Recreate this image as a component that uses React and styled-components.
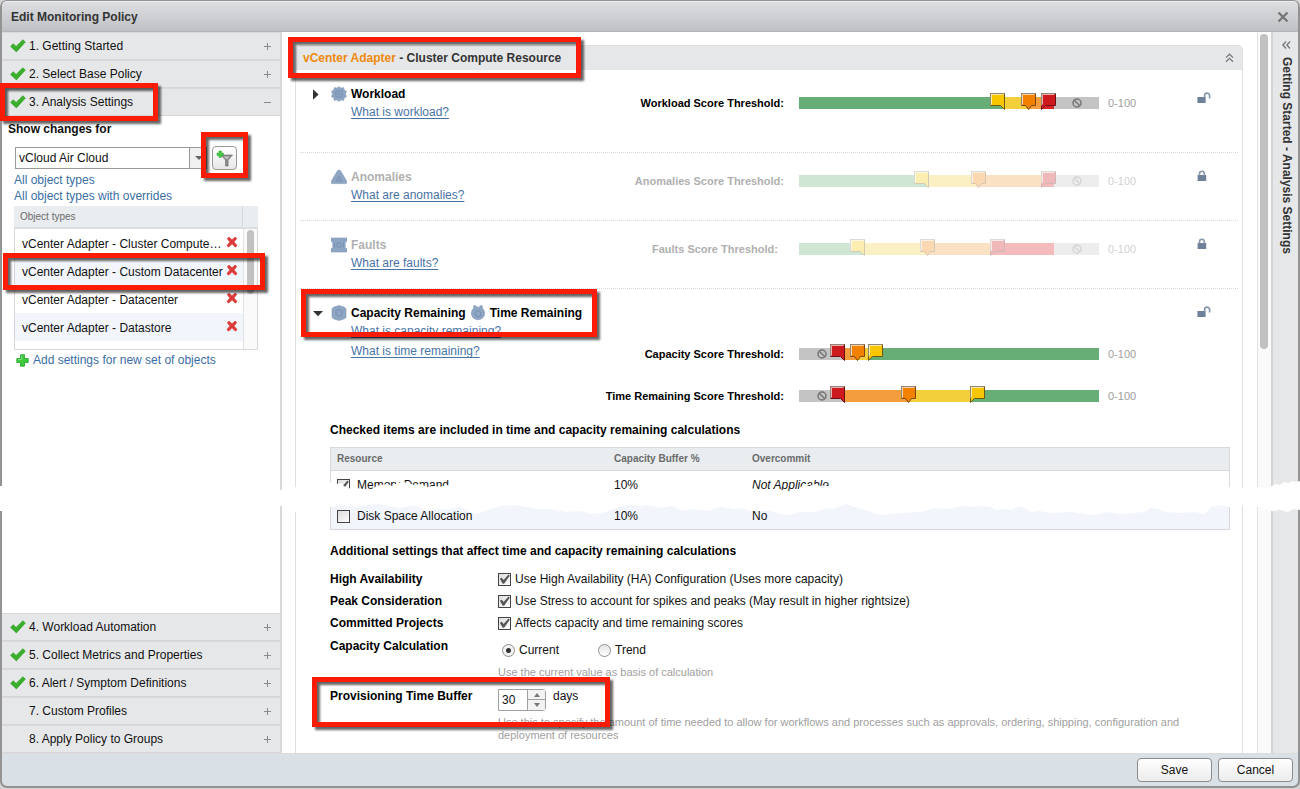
import { useState } from 'react'
import styled, { createGlobalStyle, css } from 'styled-components'

const GlobalStyle = createGlobalStyle`
  * {
    box-sizing: border-box;
  }

  body {
    margin: 0;
    background: #d4d4d4;
    color: #111;
    font-family: "Liberation Sans", Arial, Helvetica, sans-serif;
    font-size: 12px;
    line-height: 16px;
  }

  button, input, select {
    margin: 0;
    padding: 0;
    font: inherit;
    color: inherit;
  }
`

const Dialog = styled.div`
  position: relative;
  display: flex;
  flex-direction: column;
  height: calc(100vh - 1px);
  min-height: 600px;
  border: 2px solid #939393;
  border-top-width: 1px;
  border-radius: 7px;
  background: #d9e0e6;
`

const TitleBar = styled.header`
  display: flex;
  flex: none;
  align-items: center;
  justify-content: space-between;
  height: 31px;
  padding: 0 9px;
  border-top: 1px solid #ececee;
  border-bottom: 1px solid #b4b6b9;
  border-radius: 5px 5px 0 0;
  background: linear-gradient(#dddee1, #bfc1c5);
`

const Title = styled.h1`
  margin: 0;
  font-size: 12px;
  color: #333;
`

const IconButton = styled.button`
  display: flex;
  align-items: center;
  justify-content: center;
  border: 0;
  background: none;
  cursor: pointer;
`

const Body = styled.div`
  display: flex;
  flex: 1;
  min-height: 0;
`

const Footer = styled.footer`
  display: flex;
  flex: none;
  align-items: center;
  justify-content: flex-end;
  gap: 6px;
  height: 33px;
  padding: 0 5px;
  border-top: 1px solid #dcdcdc;
`

const FooterButton = styled.button`
  width: 75px;
  height: 24px;
  border: 1px solid #8c8c8c;
  border-radius: 4px;
  background: linear-gradient(#fff, #ececec);
  cursor: pointer;
`

/* red frame laid over a part of the dialog */
const Highlight = styled.div`
  position: absolute;
  z-index: 5;
  top: ${({ $top }) => $top}px;
  left: ${({ $left }) => $left}px;
  width: ${({ $width }) => $width}px;
  height: ${({ $height }) => $height}px;
  border: 5px solid #fa1c05;
  filter: drop-shadow(3px 3px 1px rgba(0, 0, 0, 0.6));
  pointer-events: none;
`

const Anchor = styled.div`
  position: relative;
`

const Sidebar = styled.aside`
  display: flex;
  flex: none;
  flex-direction: column;
  width: 280px;
  border-right: 2px solid #d9d9db;
  background: #fff;
`

const SectionButton = styled.button`
  display: flex;
  align-items: center;
  width: 100%;
  height: 28px;
  padding: 0 8px;
  border: 0;
  border-top: 1px solid #dadadc;
  border-bottom: 1px solid #d6d6d8;
  background: #e6e7e9;
  text-align: left;
  cursor: pointer;
`

const CheckSlot = styled.span`
  display: flex;
  width: 19px;
`

const SectionName = styled.span`
  flex: 1;
`

const SectionBody = styled.div`
  flex: 1;
  min-height: 0;
  padding: 5px 22px 0 12px;
`

const FieldLabel = styled.label`
  display: block;
  margin: 0 0 9px -6px;
  font-weight: bold;
`

const PickerRow = styled.div`
  display: flex;
  align-items: center;
  gap: 5px;
  padding-left: 1px;
`

const SelectBox = styled.div`
  position: relative;
  width: 192px;

  &::after {
    content: '';
    position: absolute;
    top: 9px;
    right: 4px;
    border: 4px solid transparent;
    border-top-color: #666;
    pointer-events: none;
  }
`

const Select = styled.select`
  width: 100%;
  height: 22px;
  padding: 0 20px 0 3px;
  border: 1px solid #999;
  border-radius: 0;
  appearance: none;
  background: linear-gradient(90deg, #fff calc(100% - 17px), #999 calc(100% - 17px), #999 calc(100% - 16px), #f0f0f0 calc(100% - 16px));
`

const FilterButton = styled(IconButton)`
  width: 25px;
  height: 24px;
  border: 1px solid #999;
  border-radius: 4px;
  background: linear-gradient(#fff, #e8e8e8);
`

const LinkList = styled.div`
  display: flex;
  flex-direction: column;
  align-items: flex-start;
  margin: 2px 0;
`

const Link = styled.a`
  color: #3a6ea5;
  text-decoration: none;
`

const Grid = styled.div`
  position: relative;
`

const GridHead = styled.div`
  display: grid;
  grid-template-columns: 1fr 15px;
  height: 23px;
  border-bottom: 2px solid #dcdddf;
  background: #e9edf0;
  color: #6b6b6b;
  font-size: 10px;
  line-height: 21px;

  span {
    padding-left: 6px;
    border-right: 1px solid #d5d8db;
  }
`

const GridBody = styled.div`
  display: flex;
  height: 121px;
  border: 1px solid #d6d8da;
  border-top: 0;
  overflow: hidden;
`

const TypeList = styled.ul`
  flex: 1;
  min-width: 0;
  margin: 0;
  padding: 0;
  list-style: none;
`

const TypeRow = styled.li`
  display: flex;
  align-items: center;
  justify-content: space-between;
  height: 28px;
  padding: 0 5px 2px 7px;

  &:nth-child(even) {
    background: #f2f5fb;
  }

  span {
    padding-top: 3px;
    white-space: nowrap;
  }
`

const Track = styled.div`
  flex: none;
  width: 14px;
  padding: ${({ $small }) => $small ? '1px 3px' : '2px 3px 2px 2px'};
  border-left: 1px solid #e2e2e2;
  background: #fafafa;
`

const Thumb = styled.div`
  height: ${({ $size }) => $size};
  border-radius: 4px;
  background: #c1c1c1;
`

const AddLink = styled(Link)`
  display: flex;
  align-items: center;
  gap: 4px;
  margin: 2px 0 0 2px;
`

const Main = styled.main`
  flex: 1;
  min-width: 0;
  padding: 13px 14px 0 13px;
  background: #fff;
  overflow: hidden;
`

const Panel = styled.section`
  min-height: 100%;
  padding-bottom: 30px;
  border: 1px solid #dedfe1;
  border-radius: 5px 5px 0 0;
`

const PanelHead = styled.div`
  position: relative;
  display: flex;
  align-items: center;
  justify-content: space-between;
  height: 24px;
  padding: 0 8px 0 7px;
  border-radius: 4px 4px 0 0;
  background: #e6e7e9;
`

const PanelTitle = styled.h2`
  margin: 0;
  color: #333;
  font-size: 12px;

  span {
    color: #ee8a0c;
  }
`

const MetricRow = styled.div`
  position: relative;
  display: flex;
  min-height: ${({ $tall }) => $tall ? 83 : 68}px;
  margin: 0 4px;
  border-bottom: ${({ $open }) => $open ? '0' : '1px dotted #d8d8d8'};
`

const Toggle = styled(IconButton)`
  justify-content: flex-start;
  flex: none;
  width: 31px;
  height: 18px;
  margin-top: 15px;
  padding-left: 12px;
`

const Head = styled.div`
  flex: 1;
  padding-top: 15px;
  line-height: 18px;
`

const Names = styled.div`
  display: flex;
  align-items: center;
  gap: 4px;
  color: ${({ $muted }) => $muted ? '#b0b0b0' : '#000'};
  font-weight: bold;
`

const HelpLinks = styled.div`
  display: flex;
  flex-direction: column;
  align-items: flex-start;
  gap: 2px;
  padding-left: 20px;

  a {
    color: #4a73a5;
    text-decoration: underline;
    text-underline-offset: 2px;
  }
`

const Scales = styled.div`
  display: flex;
  flex-direction: column;
  gap: 26px;
  padding-top: ${({ $top }) => $top}px;
`

const ScaleRow = styled.div`
  display: grid;
  grid-template-columns: 190px 300px 83px;
  column-gap: 15px;
  align-items: center;
`

const ScaleLabel = styled.span`
  color: ${({ $muted }) => $muted ? '#b0b0b0' : '#000'};
  font-size: 11px;
  font-weight: bold;
  text-align: right;
  white-space: pre;
`

const Bar = styled.div`
  position: relative;
  display: flex;
  height: 12px;
  opacity: ${({ $muted }) => $muted ? 0.3 : 1};
`

const Segment = styled.span`
  display: flex;
  align-items: center;
  justify-content: center;
  background: ${({ $tone }) => tones[$tone].bar};
`

const Marker = styled.button`
  position: absolute;
  top: -4px;
  width: 15px;
  height: 17px;
  border: 0;
  background: none;
  cursor: pointer;
  transform: translateX(${({ $tail }) => tails[$tail].shift});

  svg {
    display: block;
  }
`

const Range = styled.span`
  margin-left: -6px;
  color: #a0a0a0;
  font-size: 11px;
  opacity: ${({ $muted }) => $muted ? 0.5 : 1};
`

const LockButton = styled(IconButton)`
  align-items: flex-start;
  justify-content: flex-start;
  flex: none;
  width: 41px;
  height: 14px;
  margin-top: ${({ $tall }) => $tall ? 22 : 17}px;
`

const Details = styled.div`
  padding: 18px 12px 0 34px;
`

const SubTitle = styled.h3`
  margin: 0 0 9px;
  color: #000;
  font-size: 12px;
`

const Table = styled.table`
  width: 100%;
  margin-bottom: 13px;
  border: 1px solid #d6d8db;
  border-spacing: 0;
  table-layout: fixed;

  th {
    height: 23px;
    padding: 0 6px;
    border-bottom: 1px solid #d6d8db;
    background: #e9edf0;
    color: #6b6b6b;
    font-size: 10px;
    text-align: left;
  }

  th:nth-child(1) {
    width: 277px;
  }

  th:nth-child(2) {
    width: 138px;
  }

  td {
    padding: 6px 6px 5px;
    vertical-align: top;
  }

  tbody tr:first-child td {
    padding-bottom: 9px;
  }

  tbody tr:nth-child(even) {
    background: #f2f5fb;
  }
`

const CheckLabel = styled.label`
  display: flex;
  align-items: center;
  gap: ${({ $gap }) => $gap || 4}px;
`

const Checkbox = styled.input`
  flex: none;
  width: 13px;
  height: 13px;
  border: 1px solid #444;
  appearance: none;
  background: linear-gradient(135deg, #dcdcdc, #fff);

  &:checked::before {
    content: '';
    display: block;
    width: 11px;
    height: 11px;
    background: #555;
    clip-path: polygon(8% 48%, 26% 38%, 42% 60%, 86% 8%, 98% 20%, 46% 94%, 34% 94%);
  }
`

const Radio = styled.input`
  flex: none;
  width: 13px;
  height: 13px;
  border: 1px solid #8e8e8e;
  border-radius: 50%;
  appearance: none;
  background: linear-gradient(#e4e4e4, #fff);

  &:checked {
    background: radial-gradient(circle, #333 0 2px, #f2f2f2 3px);
  }
`

const SettingRow = styled.div`
  position: relative;
  display: grid;
  grid-template-columns: 168px 1fr;
  min-height: 22px;
  ${({ $start }) => $start ? css`
    align-items: start;
  ` : css`
    align-items: center;
  `}
  padding-top: ${({ $pad }) => $pad || 0}px;
  margin-top: ${({ $space }) => $space || 0}px;
`

const SettingName = styled.span`
  color: #000;
  font-weight: bold;
`

const RadioGroup = styled.div`
  display: grid;
  grid-template-columns: 96px 96px;
  padding: 4px 0 0 4px;
`

const Hint = styled.p`
  max-width: 700px;
  margin: ${({ $space }) => $space}px 0 0;
  color: #a0a0a0;
  font-size: 11px;
  line-height: 13px;
`

const BufferField = styled.div`
  display: flex;
  align-items: flex-start;
  gap: 7px;
  height: 23px;
`

const Spinner = styled.div`
  display: flex;
  width: 48px;
  height: 22px;
  margin-top: 1px;
  border: 1px solid #a0a0a0;
  border-radius: 0 3px 3px 0;

  input {
    width: 28px;
    padding-left: 3px;
    border: 0;
    background: #fff;
  }
`

const Steps = styled.div`
  display: grid;
  flex: 1;
  grid-template-rows: 1fr 1fr;
  border-left: 1px solid #a0a0a0;
`

const Step = styled(IconButton)`
  background: #f3f3f3;

  &:first-child {
    border-bottom: 1px solid #a0a0a0;
  }
`

const Rail = styled.aside`
  display: flex;
  flex: none;
  flex-direction: column;
  align-items: center;
  gap: 7px;
  width: 27px;
  padding: 8px 0 0 2px;
  border-left: 2px solid #d3d4d6;
  background: #e6e7e9;
  color: #333;
  font-weight: bold;
`

const RailTitle = styled.span`
  writing-mode: vertical-rl;
`

const Tear = styled.svg`
  position: absolute;
  z-index: 4;
  top: 477px;
  left: -2px;
  width: calc(100% + 4px);
  height: 40px;
  pointer-events: none;
`

const tones = {
	green: { bar: '#66ae75' },
	yellow: { bar: '#f3cf3b', fill: '#f7c600', edge: '#6d5a10' },
	orange: { bar: '#f49d3c', fill: '#f28100', edge: '#7a4510' },
	red: { bar: '#dd2027', fill: '#cc1a1f', edge: '#6e1013' },
	gray: { bar: '#c4c4c4' },
}

const tails = {
	right: { shift: '-14px', path: 'M.5 .5h14v16l-4-4h-10z' },
	center: { shift: '-7px', path: 'M.5 .5h14v12h-4l-3 4l-3-4h-4z' },
	left: { shift: '-1px', path: 'M.5 .5h14v12h-10l-4 4z' },
}

const sectionsTop = [
	{ name: '1. Getting Started', done: true },
	{ name: '2. Select Base Policy', done: true },
]

const sectionsBottom = [
	{ name: '4. Workload Automation', done: true },
	{ name: '5. Collect Metrics and Properties', done: true },
	{ name: '6. Alert / Symptom Definitions', done: true },
	{ name: '7. Custom Profiles', done: false },
	{ name: '8. Apply Policy to Groups', done: false },
]

const objectTypes = [
	'vCenter Adapter - Cluster Compute…',
	'vCenter Adapter - Custom Datacenter',
	'vCenter Adapter - Datacenter',
	'vCenter Adapter - Datastore',
]

// segment ends and marker positions are in 1/300 of the bar
const metrics = [
	{
		names: [{ text: 'Workload', icon: 'workload' }],
		links: ['What is workload?'],
		tall: true,
		top: 25,
		scales: [{
			label: 'Workload Score Threshold:',
			segments: [['green', 205], ['yellow', 25], ['orange', 13], ['red', 12], ['gray', 45]],
			markers: [['yellow', 205, 'right'], ['orange', 229, 'center'], ['red', 243, 'left']],
		}],
	},
	{
		names: [{ text: 'Anomalies', icon: 'anomalies' }],
		links: ['What are anomalies?'],
		locked: true,
		top: 20,
		scales: [{
			label: 'Anomalies Score Threshold:',
			segments: [['green', 129], ['yellow', 50], ['orange', 64], ['red', 12], ['gray', 45]],
			markers: [['yellow', 129, 'right'], ['orange', 179, 'center'], ['red', 243, 'left']],
		}],
	},
	{
		names: [{ text: 'Faults', icon: 'faults' }],
		links: ['What are faults?'],
		locked: true,
		top: 20,
		scales: [{
			label: 'Faults Score Threshold:\u00a0\u00a0',
			segments: [['green', 65], ['yellow', 63], ['orange', 64], ['red', 63], ['gray', 45]],
			markers: [['yellow', 65, 'right'], ['orange', 128, 'center'], ['red', 192, 'left']],
		}],
	},
	{
		names: [{ text: 'Capacity Remaining', icon: 'capacity' }, { text: 'Time Remaining', icon: 'time' }],
		links: ['What is capacity remaining?', 'What is time remaining?'],
		open: true,
		top: 57,
		scales: [
			{
				label: 'Capacity Score Threshold:',
				segments: [['gray', 45], ['orange', 13], ['yellow', 12], ['green', 230]],
				markers: [['red', 45, 'right'], ['orange', 58, 'center'], ['yellow', 70, 'left']],
			},
			{
				label: 'Time Remaining Score Threshold:',
				segments: [['gray', 45], ['orange', 64], ['yellow', 63], ['green', 128]],
				markers: [['red', 45, 'right'], ['orange', 109, 'center'], ['yellow', 172, 'left']],
			},
		],
	},
]

const CheckIcon = () => (
	<svg width="16" height="14" viewBox="0 0 16 14">
		<path d="M.6 7.400 3.200 4.700l2.900 2.700L12.800.8l2.600 2.200L6.400 12.900z" fill="#38b02a" stroke="#2f9a24" strokeWidth=".6" strokeLinejoin="round" />
	</svg>
)

const SignIcon = ({ minus }) => (
	<svg width="9" height="9" viewBox="0 0 9 9" stroke="#8a8a8a" strokeWidth="1">
		<path d={ minus ? 'M1 4.5h7' : 'M1 4.5h7M4.5 1v7' } />
	</svg>
)

const CloseIcon = () => (
	<svg width="12" height="12" viewBox="0 0 12 12" stroke="#777" strokeWidth="2.4">
		<path d="M1.5 1.5l9 9M10.5 1.5l-9 9" />
	</svg>
)

const RemoveIcon = () => (
	<svg width="12" height="12" viewBox="0 0 11 11">
		<path d="M.8 2.600 2.800.6 5.500 3.200 8.400.6 10.200 2.400 7.600 5.400 10.500 8.600 8.600 10.500 5.500 7.600 2.400 10.500.5 8.600 3.300 5.400z" fill="#dd3a3a" />
	</svg>
)

const AddIcon = () => (
	<svg width="13" height="13" viewBox="0 0 13 13">
		<path d="M4.5.8h4v3.700h3.700v4H8.500v3.700h-4V8.500H.8v-4h3.700z" fill="#3ccb3c" stroke="#23a023" strokeWidth=".8" />
		<path d="M5.600 2v3.600H2" fill="none" stroke="#8ce78c" strokeWidth=".8" />
	</svg>
)

const FilterIcon = () => (
	<svg width="17" height="17" viewBox="0 0 17 17">
		<path d="M5 5h11.500l-4.400 5v6h-2.600v-6z" fill="#8d8d8d" stroke="#666" strokeWidth=".6" />
		<path d="M7.400 6.400h6l-2.400 2.800z" fill="#c9c9c9" />
		<path d="M3 1h2.400v2h2v2.400h-2v2H3v-2H1V3h2z" fill="#46cc46" stroke="#27a327" strokeWidth=".5" />
	</svg>
)

const CollapseIcon = ({ left }) => (
	<svg width="9" height="10" viewBox="0 0 9 10" fill="none" stroke="#777" strokeWidth="1.3">
		<path d={ left ? 'M4 1.5.9 5 4 8.5M8 1.5 4.9 5 8 8.5' : 'M1 4.6 4.5 1.2 8 4.6M1 8.8l3.5-3.4L8 8.8' } />
	</svg>
)

const ArrowIcon = ({ open }) => (
	<svg width="12" height="11" viewBox="0 0 12 11" fill="#333">
		<path d={ open ? 'M1 3h10L6 8.2z' : 'M1 .2v10.6L6.6 5.5z' } />
	</svg>
)

const LockIcon = ({ locked }) => (
	<svg width="14" height="12" viewBox="0 0 14 12">
		<path d={ locked ? 'M.6 5h8.600v6H.6z' : 'M.4 5h8.200v6H.4z' } fill="#6f8199" />
		<path
			d={ locked ? 'M2.500 5.400V3.600a2.400 2.400 0 0 1 4.800 0v1.800' : 'M7.600 5.400V3.400a2.500 2.300 0 0 1 5 0V6.500' }
			fill="none"
			stroke="#8796aa"
			strokeWidth="1.6"
		/>
	</svg>
)

const BanIcon = () => (
	<svg width="10" height="10" viewBox="0 0 10 10" fill="none" stroke="#757575" strokeWidth="1.5">
		<circle cx="5" cy="5" r="4" />
		<path d="M2.2 2.2l5.6 5.6" />
	</svg>
)

const badgeShapes = {
	workload: 'M8 .6l2 1.6 2.6-.6.6 2.5 2.3 1.3L14.4 8l1.1 2.6-2.3 1.3-.6 2.5-2.6-.6-2 1.6-2-1.6-2.6.6-.6-2.5-2.3-1.3L1.6 8 .5 5.4l2.3-1.3.6-2.5 2.6.6z',
	anomalies: 'M6.6 1.6Q8 .4 9.400 1.600L15.600 12v2.600H.4V12z',
	faults: 'M0 1h16v3l-1.800 1.600v4.800L16 12v3H0v-3l1.800-1.600V5.600L0 4z',
	capacity: 'M8 .5l5.500 1.700 1.500 1.500v8.600l-1.500 1.500L8 15.500l-5.500-1.700L1 12.300V3.700l1.500-1.500z',
	time: 'M3.600.8h2.400l.6 1.400h2.800L10 .8h2.400v2.500A6.700 6.500 0 1 1 3.600 3.300z',
}

const BadgeIcon = ({ name }) => (
	<svg width="16" height="16" viewBox="0 0 16 16">
		<path d={ badgeShapes[name] } fill="#8ea6c3" stroke="#8199b8" strokeWidth=".6" />
		<g fill="none" stroke="#7890b1" strokeWidth="1">
			{ name === 'workload' && <path d="M5 5h6v6H5zM7.500 7.500h1v1h-1z" /> }
			{ name === 'anomalies' && <path d="M8 7l2.800 5H5.200z" /> }
			{ name === 'faults' && <path d="M6 6h4v4H6zM3.500 5.500v5M12.500 5.500v5" /> }
			{ name === 'capacity' && <path d="M8 4.500l3 1.800v3.400l-3 1.800-3-1.800V6.300z" /> }
			{ name === 'time' && <circle cx="8" cy="8.800" r="3" /> }
		</g>
	</svg>
)

const MarkerIcon = ({ tone, tail }) => (
	<svg width="15" height="17" viewBox="0 0 15 17">
		<path d={ tails[tail].path } fill={ tones[tone].fill } stroke={ tones[tone].edge } />
		<path d="M.5 12.500V.5h14" fill="none" stroke="#8f8778" />
		<path d="M1.500 11.500v-10h12" fill="none" stroke="#fff" strokeOpacity=".65" />
	</svg>
)

const Section = ({ name, done, open }) => (
	<SectionButton type="button" aria-expanded={ !!open }>
		<CheckSlot>{ done && <CheckIcon /> }</CheckSlot>
		<SectionName>{ name }</SectionName>
		<SignIcon minus={ open } />
	</SectionButton>
)

const Scale = ({ label, segments, markers, muted }) => (
	<ScaleRow>
		<ScaleLabel $muted={ muted }>{ label }</ScaleLabel>
		<Bar $muted={ muted }>
			{ segments.map(([tone, size]) => (
				<Segment key={ tone } $tone={ tone } style={ { width: `${size / 3}%` } }>
					{ tone === 'gray' && <BanIcon /> }
				</Segment>)) }
			{ markers.map(([tone, at, tail]) => (
				<Marker
					key={ tone }
					type="button"
					aria-label={ `${tone} threshold` }
					$tail={ tail }
					style={ { left: `${at / 3}%` } }
				>
					<MarkerIcon tone={ tone } tail={ tail } />
				</Marker>)) }
		</Bar>
		<Range $muted={ muted }>0-100</Range>
	</ScaleRow>
)

const Metric = ({ names, links, scales, locked, tall, open, top }) => (
	<MetricRow $tall={ tall } $open={ open }>
		<Toggle type="button" aria-label={ names[0].text } disabled={ locked }>
			{ !locked && <ArrowIcon open={ open } /> }
		</Toggle>
		<Head>
			<Names $muted={ locked }>
				{ names.map(({ text, icon }) => [
					<BadgeIcon key={ icon } name={ icon } />,
					<span key={ text }>{ text }</span>,
				]) }
			</Names>
			<HelpLinks>
				{ links.map(link => <Link key={ link } href="#help">{ link }</Link>) }
			</HelpLinks>
		</Head>
		<Scales $top={ top }>
			{ scales.map(scale => <Scale key={ scale.label } { ...scale } muted={ locked } />) }
		</Scales>
		<LockButton type="button" aria-label="Lock" $tall={ tall }>
			<LockIcon locked={ locked } />
		</LockButton>
		{ open && <Highlight $top={ 0 } $left={ 1 } $width={ 296 } $height={ 48 } /> }
	</MetricRow>
)

const PolicySidebar = () => (
	<Sidebar>
		{ sectionsTop.map(section => <Section key={ section.name } { ...section } />) }
		<Anchor>
			<Section name="3. Analysis Settings" done open />
			<Highlight $top={ -5 } $left={ -2 } $width={ 158 } $height={ 38 } />
		</Anchor>
		<SectionBody>
			<FieldLabel htmlFor="group">Show changes for</FieldLabel>
			<PickerRow>
				<SelectBox>
					<Select id="group">
						<option>vCloud Air Cloud</option>
					</Select>
				</SelectBox>
				<Anchor>
					<FilterButton type="button" aria-label="Filter"><FilterIcon /></FilterButton>
					<Highlight $top={ -14 } $left={ -11 } $width={ 47 } $height={ 46 } />
				</Anchor>
			</PickerRow>
			<LinkList>
				<Link href="#all">All object types</Link>
				<Link href="#overrides">All object types with overrides</Link>
			</LinkList>
			<Grid>
				<GridHead><span>Object types</span></GridHead>
				<GridBody>
					<TypeList>
						{ objectTypes.map(type => (
							<TypeRow key={ type }>
								<span>{ type }</span>
								<IconButton type="button" aria-label="Remove"><RemoveIcon /></IconButton>
							</TypeRow>)) }
					</TypeList>
					<Track $small><Thumb $size="64px" /></Track>
				</GridBody>
				<Highlight $top={ 47 } $left={ -11 } $width={ 262 } $height={ 37 } />
			</Grid>
			<AddLink href="#add"><AddIcon />Add settings for new set of objects</AddLink>
		</SectionBody>
		{ sectionsBottom.map(section => <Section key={ section.name } { ...section } />) }
	</Sidebar>
)

const ResourceTable = () => (
	<Table>
		<thead>
			<tr>
				<th>Resource</th>
				<th>Capacity Buffer %</th>
				<th>Overcommit</th>
			</tr>
		</thead>
		<tbody>
			<tr>
				<td><CheckLabel $gap={ 7 }><Checkbox type="checkbox" defaultChecked />Memory Demand</CheckLabel></td>
				<td>10%</td>
				<td><em>Not Applicable</em></td>
			</tr>
			<tr>
				<td><CheckLabel $gap={ 7 }><Checkbox type="checkbox" />Disk Space Allocation</CheckLabel></td>
				<td>10%</td>
				<td>No</td>
			</tr>
		</tbody>
	</Table>
)

const toggles = [
	{ name: 'High Availability', text: 'Use High Availability (HA) Configuration (Uses more capacity)' },
	{ name: 'Peak Consideration', text: 'Use Stress to account for spikes and peaks (May result in higher rightsize)' },
	{ name: 'Committed Projects', text: 'Affects capacity and time remaining scores' },
]

const AdditionalSettings = () => {
	const [days, setDays] = useState(30)

	return (
		<>
			{ toggles.map(({ name, text }) => (
				<SettingRow key={ name }>
					<SettingName>{ name }</SettingName>
					<CheckLabel><Checkbox type="checkbox" defaultChecked />{ text }</CheckLabel>
				</SettingRow>)) }
			<SettingRow $start $pad={ 4 }>
				<SettingName>Capacity Calculation</SettingName>
				<div>
					<RadioGroup>
						<CheckLabel><Radio type="radio" name="calc" defaultChecked />Current</CheckLabel>
						<CheckLabel><Radio type="radio" name="calc" />Trend</CheckLabel>
					</RadioGroup>
					<Hint $space={ 8 }>Use the current value as basis of calculation</Hint>
				</div>
			</SettingRow>
			<SettingRow $start $space={ 9 }>
				<SettingName as="label" htmlFor="days">Provisioning Time Buffer</SettingName>
				<div>
					<BufferField>
						<Spinner>
							<input id="days" type="text" value={ days } onChange={ e => setDays(Number(e.target.value) || 0) } />
							<Steps>
								<Step type="button" aria-label="More" onClick={ () => setDays(days + 1) }>
									<svg width="6" height="4"><path d="M0 4l3-4 3 4z" fill="#777" /></svg>
								</Step>
								<Step type="button" aria-label="Less" onClick={ () => setDays(days - 1) }>
									<svg width="6" height="4"><path d="M0 0h6L3 4z" fill="#777" /></svg>
								</Step>
							</Steps>
						</Spinner>
						<span>days</span>
					</BufferField>
					<Hint $space={ 5 }>
						Use this to specify the amount of time needed to allow for workflows and processes such as
						approvals, ordering, shipping, configuration and deployment of resources
					</Hint>
				</div>
				<Highlight $top={ -11 } $left={ -18 } $width={ 298 } $height={ 50 } />
			</SettingRow>
		</>
	)
}

// ragged white strip where the middle of the dialog is left out
const TornStrip = () => (
	<Tear viewBox="0 0 1300 40" preserveAspectRatio="none" aria-hidden="true">
		<path
			fill="#fff"
			d="M0 8 60 9 140 12 220 11 281 12 295 9 322 7 331 4 336 6 341 5 344 8 348 11 352 9 357 10 366 12 372 11
			377 8 381 7 387 6 392 8 397 5 403 4 408 5 414 7 420 6 427 9 434 8 440 9 446 7 452 8 470 13 520 15 580 14
			640 15 700 13 750 10 756 11 768 13 780 12 790 13 799 11 803 7 809 8 815 6 820 8 826 7 832 11 900 15 1000 13
			1100 15 1180 12 1230 9 1244 10 1258 9 1266 10 1272 8 1276 6 1280 7 1284 4 1288 5 1292 3 1296 4 1300 3
			V32 L1294 31 1288 34 1280 32 1272 33 1262 29 1244 28 1230 29 1222 27 1216 28 1211 29 1205 36 1195 34
			1180 35 1165 34 1158 31 1151 30 1144 34 1120 36 1108 34 1092 37 1072 34 1050 35 1040 33 1032 34 1024 30
			1019 28 1012 32 1004 31 996 32 990 29 982 28 974 29 962 28 948 31 936 30 920 34 900 35 880 37 872 34
			862 31 854 29 846 26 840 28 833 31 826 30 816 34 800 34 790 37 776 35 770 33 750 33 742 30 735 31
			720 29 708 33 692 31 682 33 672 28 660 30 648 27 640 28 626 27 614 31 602 35 590 36 580 33 566 34 550 31
			538 31 526 29 515 27 500 28 488 32 476 36 468 33 460 28 450 32 438 31 426 33 414 27 400 30 390 28 378 26
			368 27 356 29 344 27 331 29 318 31 295 34 281 28 200 31 100 32 0 33z"
		/>
	</Tear>
)

const App = () => (
	<>
		<GlobalStyle />
		<Dialog>
			<TitleBar>
				<Title>Edit Monitoring Policy</Title>
				<IconButton type="button" aria-label="Close"><CloseIcon /></IconButton>
			</TitleBar>
			<Body>
				<PolicySidebar />
				<Main>
					<Panel>
						<PanelHead>
							<PanelTitle><span>vCenter Adapter</span> - Cluster Compute Resource</PanelTitle>
							<IconButton type="button" aria-label="Collapse"><CollapseIcon /></IconButton>
							<Highlight $top={ -9 } $left={ -8 } $width={ 293 } $height={ 41 } />
						</PanelHead>
						{ metrics.map(metric => <Metric key={ metric.names[0].text } { ...metric } />) }
						<Details>
							<SubTitle>Checked items are included in time and capacity remaining calculations</SubTitle>
							<ResourceTable />
							<SubTitle>Additional settings that affect time and capacity remaining calculations</SubTitle>
							<AdditionalSettings />
						</Details>
					</Panel>
				</Main>
				<Track><Thumb $size="44%" /></Track>
				<Rail>
					<IconButton type="button" aria-label="Expand"><CollapseIcon left /></IconButton>
					<RailTitle>Getting Started - Analysis Settings</RailTitle>
				</Rail>
			</Body>
			<Footer>
				<FooterButton type="button">Save</FooterButton>
				<FooterButton type="button">Cancel</FooterButton>
			</Footer>
			<TornStrip />
		</Dialog>
	</>
)

export default App
